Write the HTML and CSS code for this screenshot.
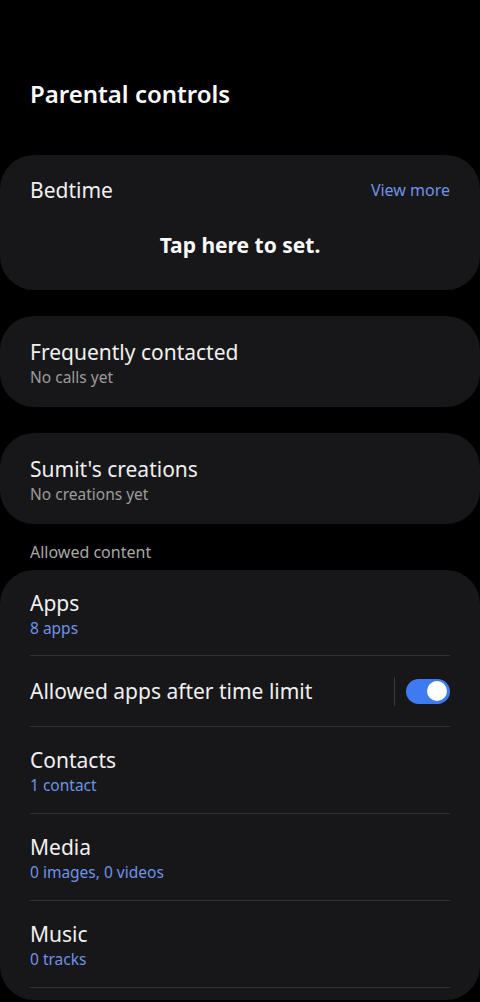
FILE: index.html
```html
<!DOCTYPE html>
<html lang="en">
<head>
    <meta charset="UTF-8">
    <meta name="viewport" content="width=device-width, initial-scale=1.0">
    <title>Parental controls</title>
    <link rel="stylesheet" href="styles.css">
</head>
<body>
    <h1 class="page-title">Parental controls</h1>

    <div class="card bedtime">
        <div class="bedtime-head">
            <span class="row-title">Bedtime</span>
            <span class="view-more">View more</span>
        </div>
        <div class="bedtime-set">Tap here to set.</div>
    </div>

    <div class="card single">
        <div class="row-title">Frequently contacted</div>
        <div class="row-sub">No calls yet</div>
    </div>

    <div class="card single">
        <div class="row-title">Sumit's creations</div>
        <div class="row-sub">No creations yet</div>
    </div>

    <div class="section-label">Allowed content</div>

    <div class="card list">
        <div class="list-row">
            <div class="row-title">Apps</div>
            <div class="row-sub blue">8 apps</div>
        </div>
        <div class="list-row switch-row">
            <div class="row-title">Allowed apps after time limit</div>
            <div class="switch-wrap">
                <span class="switch-sep"></span>
                <span class="switch on"><span class="knob"></span></span>
            </div>
        </div>
        <div class="list-row">
            <div class="row-title">Contacts</div>
            <div class="row-sub blue">1 contact</div>
        </div>
        <div class="list-row">
            <div class="row-title">Media</div>
            <div class="row-sub blue">0 images, 0 videos</div>
        </div>
        <div class="list-row">
            <div class="row-title">Music</div>
            <div class="row-sub blue">0 tracks</div>
        </div>
    </div>
</body>
</html>
```

FILE: styles.css
```css
body {
    font-family: "Noto Sans", Arial, sans-serif;
    background-color: #000;
    color: #f2f2f2;
    margin: 0;
    width: 480px;
    height: 1002px;
    overflow: hidden;
}
.page-title {
    font-size: 24px;
    font-weight: 600;
    margin: 0;
    padding: 76px 30px 0;
    height: 79px;
    line-height: 36px;
    color: #fafafa;
}
.card {
    background-color: #171719;
    border-radius: 34px;
    margin-bottom: 26px;
}
.row-title {
    font-size: 21px;
    line-height: 28px;
    color: #f0f0f0;
}
.row-sub {
    font-size: 15.5px;
    line-height: 22px;
    color: #9c9c9c;
}
.row-sub.blue {
    color: #6f92e8;
}
.bedtime {
    height: 135px;
    padding: 21px 30px 0;
    box-sizing: border-box;
}
.bedtime-head {
    display: flex;
    justify-content: space-between;
    align-items: center;
}
.view-more {
    font-size: 16px;
    color: #6f92e8;
}
.bedtime-set {
    text-align: center;
    font-size: 21px;
    font-weight: 700;
    margin-top: 27px;
    color: #fafafa;
}
.single {
    height: 91px;
    padding: 22px 30px 0;
    box-sizing: border-box;
}
.section-label {
    font-size: 16px;
    color: #a8a8a8;
    padding: 0 30px;
    margin-top: -8px;
    height: 28px;
    line-height: 20px;
}
.list {
    margin-bottom: 0;
    padding: 0 30px;
    height: 430px;
    box-sizing: border-box;
}
.list-row {
    height: 87px;
    padding-top: 19px;
    box-sizing: border-box;
    border-bottom: 1px solid #303033;
}
.list-row:first-child {
    height: 86px;
}
.switch-row {
    height: 71px;
    padding-top: 0;
    display: flex;
    align-items: center;
    justify-content: space-between;
}
.switch-wrap {
    display: flex;
    align-items: center;
}
.switch-sep {
    width: 1px;
    height: 29px;
    background-color: #3a3a3d;
    margin-right: 11px;
}
.switch {
    width: 44px;
    height: 25px;
    border-radius: 13px;
    background-color: #3f7bf0;
    position: relative;
}
.switch .knob {
    position: absolute;
    right: 3px;
    top: 2.5px;
    width: 20px;
    height: 20px;
    border-radius: 50%;
    background-color: #fff;
}
```
